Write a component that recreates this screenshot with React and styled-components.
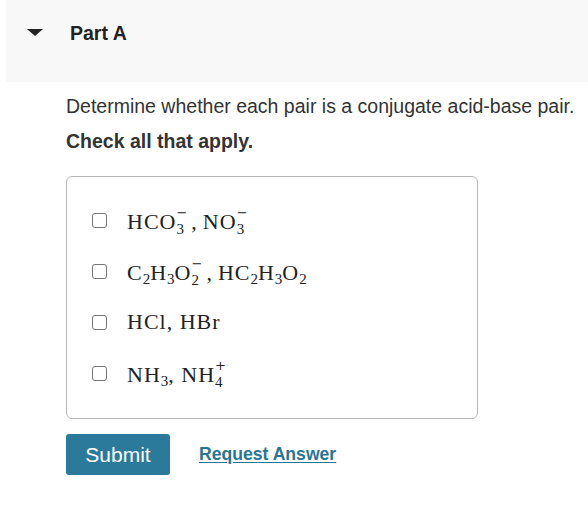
import React from "react";
import styled, { createGlobalStyle } from "styled-components";

const Global = createGlobalStyle`
  html, body { margin: 0; padding: 0; background: #fff; }
  body { font-family: "Liberation Sans", Arial, sans-serif; color: #333; }
`;

const Page = styled.div`
  width: 588px;
  height: 511px;
  overflow: hidden;
`;

const Header = styled.div`
  margin-left: 6px;
  height: 82px;
  background: #f8f8f8;
  display: flex;
  align-items: flex-start;
  padding-top: 22px;
  box-sizing: border-box;
`;

const Caret = styled.span`
  width: 0;
  height: 0;
  border-left: 8px solid transparent;
  border-right: 8px solid transparent;
  border-top: 7px solid #222;
  margin-left: 21px;
  margin-top: 7px;
`;

const Title = styled.h2`
  margin: 0 0 0 27px;
  font-size: 19.5px;
  line-height: 22px;
  font-weight: 700;
  color: #222;
`;

const Body = styled.div`
  padding: 13px 0 0 66px;
`;

const Prompt = styled.p`
  margin: 0;
  font-size: 19.5px;
  line-height: 22px;
  color: #333;
  white-space: nowrap;
`;

const Instruction = styled.p`
  margin: 13px 0 0;
  font-size: 19.5px;
  line-height: 22px;
  font-weight: 700;
  color: #333;
`;

const Box = styled.div`
  margin-top: 24px;
  width: 412px;
  height: 243px;
  box-sizing: border-box;
  border: 1px solid #b8b8b8;
  border-radius: 6px;
  padding: 30px 0 0 25px;
  display: flex;
  flex-direction: column;
  gap: 25px;
`;

const Row = styled.label`
  display: flex;
  align-items: center;
  height: 26px;
`;

const Check = styled.span`
  box-sizing: border-box;
  width: 15px;
  height: 15px;
  border: 1.5px solid #767676;
  border-radius: 3px;
  background: #fff;
  flex: none;
`;

const Formula = styled.span`
  margin-left: 20px;
  font-family: "Liberation Serif", "Times New Roman", serif;
  font-size: 22px;
  letter-spacing: 1px;
  line-height: 26px;
  color: #222;
  white-space: nowrap;
`;

const Sub = styled.span`
  font-size: 15px;
  vertical-align: -4px;
  line-height: 0;
  letter-spacing: 0;
`;

const SupSub = styled.span`
  display: inline-block;
  vertical-align: -5px;
  font-size: 15px;
  letter-spacing: 0;
  margin-right: 2px;
`;

const SupPart = styled.span`
  display: block;
  font-family: "DejaVu Serif", serif;
  font-weight: 300;
  font-size: 13px;
  line-height: 18px;
`;

const SubPart = styled.span`
  display: block;
  line-height: 14px;
`;

const Sep = styled.span`
  margin-left: 2px;
  margin-right: 5px;
`;

const Actions = styled.div`
  margin-top: 15px;
  display: flex;
  align-items: center;
  gap: 29px;
`;

const Submit = styled.button`
  width: 104px;
  height: 41px;
  border: none;
  border-radius: 3px;
  background: #2b7a9b;
  color: #fff;
  font-family: "Liberation Sans", Arial, sans-serif;
  font-size: 21px;
  padding: 0;
`;

const LinkButton = styled.a`
  font-size: 17.6px;
  font-weight: 700;
  color: #2a7596;
  text-decoration: underline;
  text-underline-offset: 2px;
`;

const Ion = ({ sub, sup }) => (
  <SupSub>
    <SupPart>{sup}</SupPart>
    <SubPart>{sub}</SubPart>
  </SupSub>
);

export default function App() {
  return (
    <Page>
      <Global />
      <Header>
        <Caret />
        <Title>Part A</Title>
      </Header>
      <Body>
        <Prompt>Determine whether each pair is a conjugate acid-base pair.</Prompt>
        <Instruction>Check all that apply.</Instruction>
        <Box>
          <Row>
            <Check />
            <Formula>
              HCO<Ion sub="3" sup="−" />
              <Sep>,</Sep>NO<Ion sub="3" sup="−" />
            </Formula>
          </Row>
          <Row>
            <Check />
            <Formula>
              C<Sub>2</Sub>H<Sub>3</Sub>O<Ion sub="2" sup="−" />
              <Sep>,</Sep>HC<Sub>2</Sub>H<Sub>3</Sub>O<Sub>2</Sub>
            </Formula>
          </Row>
          <Row>
            <Check />
            <Formula>HCl, HBr</Formula>
          </Row>
          <Row>
            <Check />
            <Formula>
              NH<Sub>3</Sub>, NH<Ion sub="4" sup="+" />
            </Formula>
          </Row>
        </Box>
        <Actions>
          <Submit>Submit</Submit>
          <LinkButton>Request Answer</LinkButton>
        </Actions>
      </Body>
    </Page>
  );
}
